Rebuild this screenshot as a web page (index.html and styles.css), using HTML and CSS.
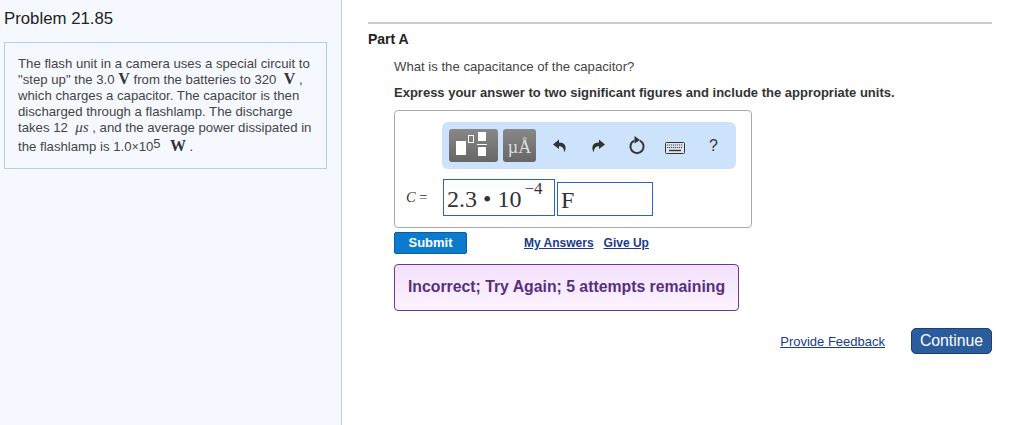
FILE: index.html
```html
<!DOCTYPE html>
<html lang="en">
<head>
  <meta charset="UTF-8">
  <title>Problem 21.85</title>
  <link rel="stylesheet" href="styles.css">
</head>
<body>

<div class="sidebar">
  <h1>Problem 21.85</h1>
  <div class="problem">
    The flash unit in a camera uses a special circuit to "step up" the 3.0 <span class="unit">V</span> from the batteries to 320 &nbsp;<span class="unit">V</span> , which charges a capacitor. The capacitor is then discharged through a flashlamp. The discharge takes 12 &nbsp;<i class="mu">&mu;s</i> , and the average power dissipated in the flashlamp is 1.0<span class="times">&times;</span>10<sup>5</sup> &nbsp;<span class="unit">W</span> .
  </div>
</div>

<div class="main">
  <h2>Part A</h2>
  <div class="part">
    <p class="question">What is the capacitance of the capacitor?</p>
    <p class="express">Express your answer to two significant figures and include the appropriate units.</p>

    <div class="editor">
      <div class="toolbar">
        <div class="tool tool-templates">
          <svg width="49" height="33" viewBox="0 0 49 33">
            <rect x="7" y="12" width="10" height="14" fill="#fff"/>
            <rect x="19.5" y="6.5" width="5" height="7" fill="none" stroke="#fff"/>
            <rect x="29" y="3" width="8" height="9" fill="#fff"/>
            <rect x="28" y="15" width="10" height="1" fill="#fff"/>
            <rect x="29" y="18" width="8" height="9" fill="#fff"/>
          </svg>
        </div>
        <div class="tool tool-units">&micro;&Aring;</div>
        <svg class="icon icon-undo" width="14" height="14" viewBox="0 0 14 14"><path d="M6 0.5 L0 5.5 L6 10 V7.2 C9 7.2 10.8 8.6 11.4 13.5 C14 8 12.6 3.4 6 3.4 Z" fill="#333"/></svg>
        <svg class="icon icon-redo" width="14" height="14" viewBox="0 0 14 14"><path d="M8 0.5 L14 5.5 L8 10 V7.2 C5 7.2 3.2 8.6 2.6 13.5 C0 8 1.4 3.4 8 3.4 Z" fill="#333"/></svg>
        <svg class="icon icon-reset" width="18" height="20" viewBox="0 0 18 20"><path d="M6.2 5.6 A6.6 6.6 0 1 0 11.8 5.6" fill="none" stroke="#333" stroke-width="2"/><path d="M6.5 1 L12 5 L6.5 8.5 Z" fill="#333"/></svg>
        <svg class="icon icon-keyboard" width="20" height="12" viewBox="0 0 20 12"><rect x="0.5" y="0.5" width="19" height="11" rx="1" fill="#dfe6ee" stroke="#333"/><path d="M2 3 H18 M2 5.5 H18" stroke="#444" stroke-dasharray="1.2 0.8"/><path d="M4 8.5 H16" stroke="#333" stroke-width="1.4"/></svg>
        <span class="help">?</span>
      </div>
      <div class="answer">
        <span class="var"><i>C</i> =</span>
        <div class="field field-value">2.3 &bull; 10<sup>&minus;4</sup></div>
        <div class="field field-units">F</div>
      </div>
    </div>

    <div class="actions">
      <button class="submit">Submit</button>
      <a href="#" class="link-answers">My Answers</a>
      <a href="#" class="link-giveup">Give Up</a>
    </div>

    <div class="feedback">Incorrect; Try Again; 5 attempts remaining</div>
  </div>

  <div class="nav">
    <a href="#">Provide Feedback</a>
    <button class="continue">Continue</button>
  </div>
</div>

</body>
</html>
```

FILE: styles.css
```css
html, body {
  height: 100%;
}
body {
  margin: 0;
  font-family: "Liberation Sans", Arial, sans-serif;
  background: #fff;
  color: #333;
  display: flex;
  overflow: hidden;
}

/* left column */
.sidebar {
  width: 342px;
  height: 425px;
  box-sizing: border-box;
  flex-shrink: 0;
  padding-top: 9px;
  background: #f5f9ff;
  border-right: 1px solid #b9cde0;
}
h1 {
  margin: 0 0 14px 4px;
  font-size: 16.8px;
  line-height: 19px;
  font-weight: normal;
  color: #222;
}
.problem {
  width: 323px;
  height: 127px;
  box-sizing: border-box;
  margin-left: 4px;
  padding: 13px 12px 0 13px;
  border: 1px solid #b9cde0;
  font-size: 13.2px;
  line-height: 16px;
  color: #444;
}
.unit {
  font-family: "Liberation Serif", serif;
  font-size: 16px;
  font-weight: bold;
  line-height: 14px;
  color: #333;
}
.mu {
  font-family: "Liberation Serif", serif;
  font-size: 15px;
  line-height: 14px;
}
.times {
  font-size: 12px;
}
.problem sup {
  font-size: 13px;
  line-height: 16px;
  vertical-align: 3px;
  margin-right: 2px;
}

/* right column */
.main {
  width: 624px;
  margin: 22px 0 0 26px;
  border-top: 2px solid #ccc;
}
h2 {
  margin: 7px 0 0;
  font-size: 14px;
  line-height: 16px;
  color: #222;
}
.part {
  padding-left: 26px;
}
.question {
  margin: 12px 0 0;
  font-size: 13.15px;
  line-height: 16px;
  color: #444;
}
.express {
  margin: 10px 0 0;
  font-size: 13px;
  line-height: 16px;
  font-weight: bold;
  color: #333;
}
.editor {
  width: 358px;
  height: 118px;
  box-sizing: border-box;
  margin-top: 9px;
  border: 1px solid #aaa;
  border-radius: 4px;
}
.toolbar {
  width: 294px;
  height: 47px;
  box-sizing: border-box;
  margin: 11px 0 0 47px;
  padding: 7px 0 0 7px;
  background: #cde3fb;
  border-radius: 6px;
  display: flex;
  align-items: flex-start;
}
.tool {
  height: 33px;
  box-sizing: border-box;
  border-radius: 3px;
  background: linear-gradient(#888, #666);
}
.tool-templates {
  width: 49px;
}
.tool-units {
  width: 33px;
  margin-left: 5px;
  padding-top: 5px;
  text-align: center;
  font-family: "Liberation Serif", serif;
  font-size: 18px;
  line-height: 26px;
  color: #ddd;
}
.icon {
  flex-shrink: 0;
}
.icon-undo {
  margin: 10px 0 0 17px;
}
.icon-redo {
  margin: 10px 0 0 24px;
}
.icon-reset {
  margin: 6px 0 0 23px;
}
.icon-keyboard {
  margin: 13px 0 0 19px;
}
.help {
  margin: 8px 0 0 24px;
  font-size: 16px;
  line-height: 18px;
  color: #333;
}
.answer {
  display: flex;
  align-items: flex-end;
  margin-top: 10px;
  font-family: "Liberation Serif", serif;
}
.var {
  width: 48px;
  box-sizing: border-box;
  padding: 0 0 11px 11px;
  font-size: 14.5px;
  line-height: 15px;
}
.field {
  box-sizing: border-box;
  border: 1px solid #2b62c4;
  font-size: 24px;
  color: #333;
}
.field-value {
  width: 112px;
  height: 37px;
  line-height: 38px;
  padding-left: 3px;
}
.field-value sup {
  font-size: 17px;
  line-height: 0;
  vertical-align: 13px;
  margin-left: 3px;
}
.field-units {
  width: 96px;
  height: 34px;
  line-height: 34px;
  margin-left: 2px;
  padding-left: 3px;
}
.actions {
  display: flex;
  align-items: center;
  margin-top: 4px;
  height: 22px;
  font-size: 12px;
  font-weight: bold;
}
.submit {
  width: 73px;
  height: 22px;
  padding: 0 0 2px;
  border: 1px solid #0a5f9e;
  border-radius: 2px;
  background: #0d7bcd;
  color: #fff;
  font-family: inherit;
  font-size: 13px;
  font-weight: bold;
}
.actions a {
  color: #1a3a8c;
}
.link-answers {
  margin-left: 57px;
}
.link-giveup {
  margin-left: 10px;
}
.feedback {
  width: 345px;
  height: 47px;
  box-sizing: border-box;
  margin-top: 10px;
  border: 1px solid #6b3a8c;
  border-radius: 4px;
  background: linear-gradient(#f3e0fc, #fdf3ff);
  color: #55307f;
  font-size: 15.8px;
  font-weight: bold;
  line-height: 44px;
  text-align: center;
}
.nav {
  display: flex;
  justify-content: flex-end;
  align-items: center;
  margin-top: 17px;
  font-size: 13px;
}
.nav a {
  color: #1a3a8c;
}
.continue {
  width: 81px;
  height: 26px;
  margin-left: 26px;
  padding: 0;
  border: 1px solid #1d3f73;
  border-radius: 5px;
  background: #2b5c9b;
  color: #fff;
  font-family: inherit;
  font-size: 15.8px;
}
```
